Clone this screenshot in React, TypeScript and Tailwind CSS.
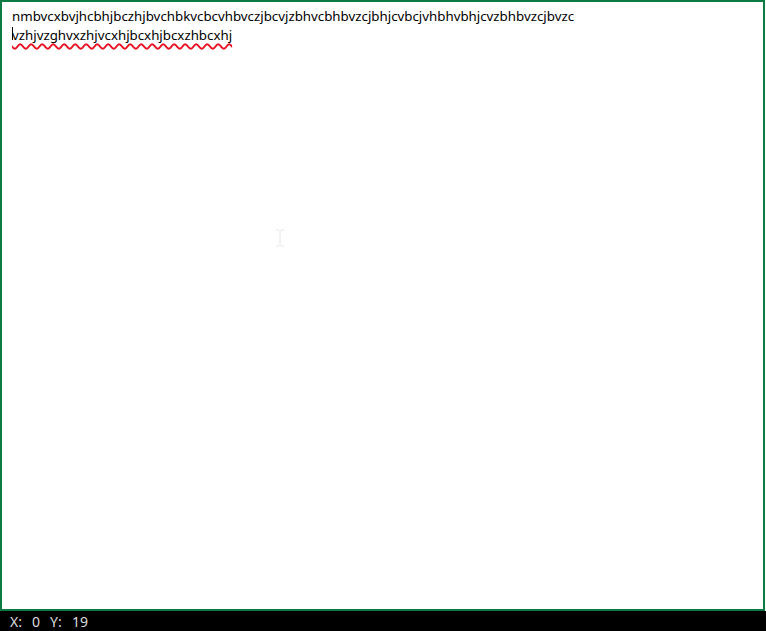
export default function App() {
  return (
    <div className="flex h-[631px] w-[766px] flex-col bg-white font-['Noto_Sans',sans-serif]">
      <div className="relative h-[611px] w-[765px] border-2 border-[#0c7a43] bg-white px-[10px] pt-[5px] text-[13.3px] leading-[19px] text-black">
        <div>nmbvcxbvjhcbhjbczhjbvchbkvcbcvhbvczjbcvjzbhvcbhbvzcjbhjcvbcjvhbhvbhjcvzbhbvzcjbvzc</div>
        <div className="relative">
          <span className="absolute left-0 top-[1px] h-[13px] w-px bg-black" />
          <span className="underline decoration-[#e81123] decoration-wavy decoration-[1.5px] underline-offset-[3px]">
            vzhjvzghvxzhjvcxhjbcxhjbcxzhbcxhj
          </span>
        </div>
        <svg className="absolute left-[272px] top-[227px]" width="12" height="18" viewBox="0 0 12 18">
          <path d="M2 1h3M7 1h3M6 1v16M2 17h3M7 17h3" stroke="#e6e6e6" strokeWidth="1" fill="none" />
        </svg>
      </div>
      <div className="flex h-[20px] items-center bg-black pl-[10px] text-[14px] text-[#dcdcdc]">
        <span className="w-[22px]">X:</span>
        <span className="w-[18px]">0</span>
        <span className="w-[22px]">Y:</span>
        <span>19</span>
      </div>
    </div>
  );
}
